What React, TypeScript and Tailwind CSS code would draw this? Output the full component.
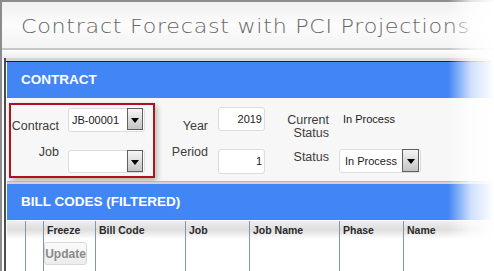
import React from "react";

function DropBtn({ w = 16, h = 22 }: { w?: number; h?: number }) {
  return (
    <div
      className="flex items-center justify-center border border-[#5f5f5f] bg-gradient-to-b from-[#f6f6f6] to-[#c4c4c4] pt-[2px]"
      style={{ width: w, height: h }}
    >
      <svg width="8" height="5" viewBox="0 0 8 5">
        <path d="M0 0 L8 0 L4 5 Z" fill="#000" />
      </svg>
    </div>
  );
}

function Select({
  value,
  w,
  h,
  pl,
  btnW = 16,
  btnH = 22,
}: {
  value: string;
  w: number;
  h: number;
  pl: number;
  btnW?: number;
  btnH?: number;
}) {
  return (
    <div
      className="flex items-start justify-between rounded-[3px] border border-[#dcdcdc] bg-white"
      style={{ width: w, height: h }}
    >
      <span
        className="self-center text-[11px] leading-[13px] text-[#1a1a1a]"
        style={{ paddingLeft: pl }}
      >
        {value}
      </span>
      <div className="mr-px mt-[-1px]">
        <DropBtn w={btnW} h={btnH} />
      </div>
    </div>
  );
}

function Input({ value, h }: { value: string; h: number }) {
  return (
    <div
      className="flex w-[47px] items-center justify-end rounded-[3px] border border-[#dcdcdc] bg-white pr-[2px] text-[11px] leading-[13px] text-[#1a1a1a]"
      style={{ height: h }}
    >
      {value}
    </div>
  );
}

const cols = [
  { w: 18, label: "" },
  { w: 18, label: "" },
  { w: 52, label: "Freeze" },
  { w: 90, label: "Bill Code" },
  { w: 64, label: "Job" },
  { w: 90, label: "Job Name" },
  { w: 64, label: "Phase" },
  { w: 91, label: "Name" },
];

export default function App() {
  return (
    <div
      className="relative h-[271px] w-[494px] overflow-hidden bg-white"
      style={{ fontFamily: '"Liberation Sans", Arial, sans-serif' }}
    >
      <div className="flex h-full flex-col border-l-2 border-t-2 border-[#8c8c8c]">
        {/* title */}
        <div className="flex h-[46px] items-center bg-gradient-to-b from-[#f0f0f0] via-[#fcfcfc] to-[#f3f3f3] pl-[19px]">
          <span
            className="origin-left scale-x-[1.17] whitespace-nowrap pt-[2px] text-[19px] leading-none tracking-[0.6px] text-[#666666]"
            style={{ fontFamily: '"DejaVu Sans", sans-serif', fontWeight: 300 }}
          >
            Contract Forecast with PCI Projections
          </span>
        </div>
        <div className="h-[2px] bg-[#c6c6c6]" />
        <div className="h-[8px] bg-gradient-to-b from-[#fdfdfd] to-[#ececec]" />
        {/* body */}
        <div className="flex flex-1 flex-col pl-[2px]">
          <div className="flex flex-1 flex-col border-l-2 border-[#4d4d4d]">
            <div className="h-[3px] bg-[#d4d4d4]" />
            <div className="h-px bg-[#1e1e1e]" />
            <div className="flex flex-1 flex-col border-l border-white">
              {/* CONTRACT bar */}
              <div className="flex h-[36px] items-center bg-[#4285f4] pl-[14px] text-[13.5px] font-bold leading-none text-white">
                CONTRACT
              </div>
              {/* form */}
              <div className="flex h-[83px] items-start bg-[#f7f7f7] pt-[5px] pl-[2px]">
                {/* red box */}
                <div className="flex h-[75px] w-[146px] border-2 border-[#b0121b] shadow-[2px_3px_6px_rgba(0,0,0,0.28)]">
                  <div className="flex w-[48px] flex-col items-end pt-[14px] text-[12.5px] leading-[14px] text-[#3c3c3c]">
                    <span>Contract</span>
                    <span className="mt-[12px]">Job</span>
                  </div>
                  <div className="ml-[9px] flex flex-col pt-[3px]">
                    <Select value="JB-00001" w={77} h={24} pl={3} />
                    <div className="mt-[18px]">
                      <Select value="" w={77} h={23} pl={3} />
                    </div>
                  </div>
                </div>
                {/* year / period */}
                <div className="ml-[13px] flex">
                  <div className="flex w-[40px] flex-col items-end pt-[16px] text-[12.5px] leading-[14px] text-[#3c3c3c]">
                    <span>Year</span>
                    <span className="mt-[12px]">Period</span>
                  </div>
                  <div className="ml-[10px] flex flex-col pt-[4px]">
                    <Input value="2019" h={24} />
                    <div className="mt-[18px]">
                      <Input value="1" h={25} />
                    </div>
                  </div>
                </div>
                {/* status */}
                <div className="ml-[14px] flex">
                  <div className="flex w-[50px] flex-col items-end pt-[11px] text-[12.5px] leading-[13px] text-[#3c3c3c]">
                    <span className="text-right">
                      Current
                      <br />
                      Status
                    </span>
                    <span className="mt-[11px]">Status</span>
                  </div>
                  <div className="ml-[10px] flex flex-col pt-[10px]">
                    <span className="pl-[4px] text-[11px] leading-[13px] text-[#1a1a1a]">
                      In Process
                    </span>
                    <div className="mt-[23px]">
                      <Select value="In Process" w={82} h={24} pl={5} btnW={17} btnH={23} />
                    </div>
                  </div>
                </div>
              </div>
              <div className="h-px bg-[#9cb8e8]" />
              <div className="h-[2px] bg-[#d2d2d2]" />
              {/* BILL CODES bar */}
              <div className="flex h-[36px] items-center bg-[#4285f4] pl-[14px] text-[13.5px] font-bold leading-none text-white">
                BILL CODES (FILTERED)
              </div>
              <div className="h-px bg-white" />
              {/* table */}
              <div className="flex flex-1">
                {cols.map((c, i) => (
                  <div
                    key={i}
                    className={
                      i === 0
                        ? "flex shrink-0 flex-col"
                        : "flex shrink-0 flex-col border-l border-[#7f98ab]"
                    }
                    style={{ width: c.w }}
                  >
                    <div className="flex h-[17px] items-center bg-gradient-to-b from-[#eeeeee] via-[#dedede] to-[#fbfbfb] pl-[3px] pt-[2px] text-[10.5px] font-bold leading-none text-[#2a2a2a]">
                      {c.label}
                    </div>
                    <div className="flex-1 bg-white">
                      {c.label === "Freeze" && (
                        <div className="mt-[4px] flex h-[23px] w-[43px] items-center justify-center rounded-[3px] border border-[#d8d8d8] bg-gradient-to-b from-[#fbfbfb] to-[#ececec] text-[12px] font-bold text-[#8a8a8a]">
                          Update
                        </div>
                      )}
                    </div>
                  </div>
                ))}
              </div>
            </div>
          </div>
        </div>
      </div>
      {/* right fade */}
      <div className="pointer-events-none absolute inset-y-0 right-0 w-[46px] bg-gradient-to-r from-transparent via-[rgba(255,255,255,0.75)] to-white" />
    </div>
  );
}
